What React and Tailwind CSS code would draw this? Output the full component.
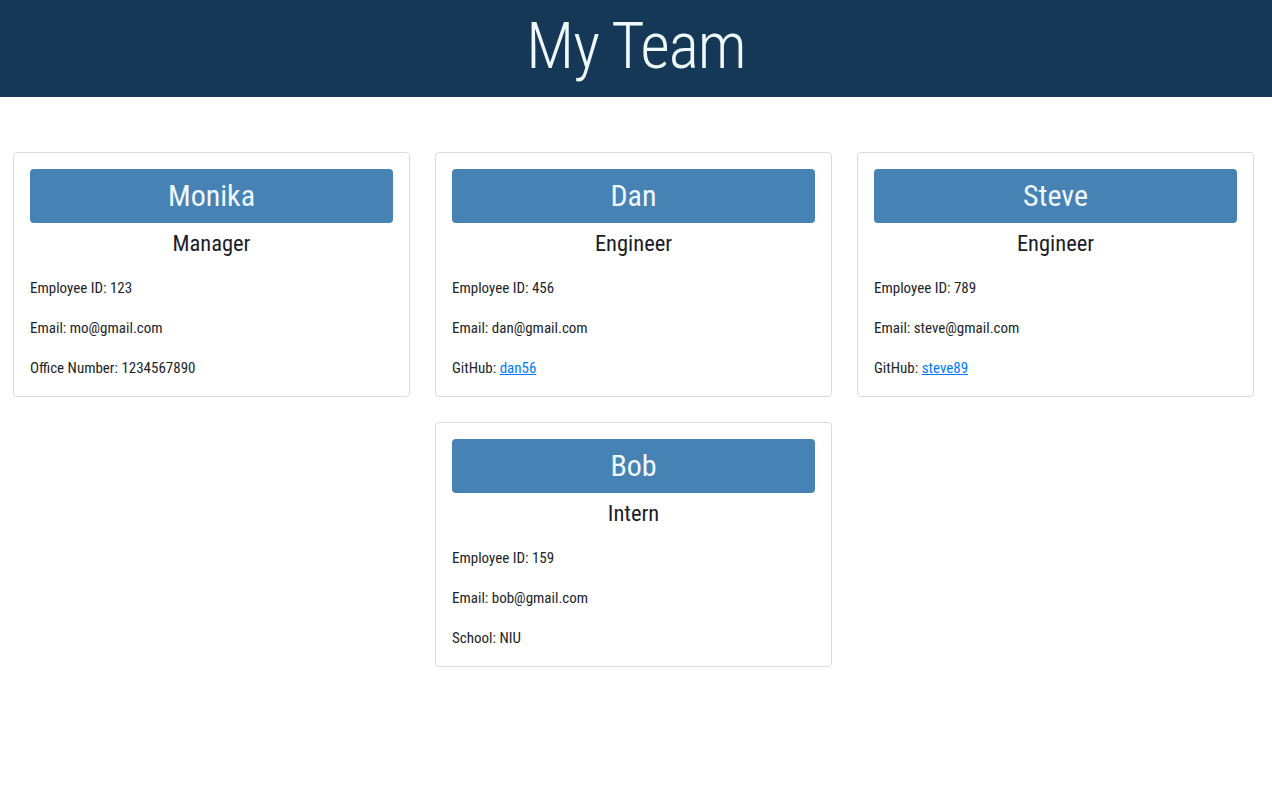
const team = [
  { name: 'Monika', role: 'Manager', id: 123, email: 'mo@gmail.com', extra: { label: 'Office Number', value: '1234567890' } },
  { name: 'Dan', role: 'Engineer', id: 456, email: 'dan@gmail.com', extra: { label: 'GitHub', value: 'dan56', link: true } },
  { name: 'Steve', role: 'Engineer', id: 789, email: 'steve@gmail.com', extra: { label: 'GitHub', value: 'steve89', link: true } },
  { name: 'Bob', role: 'Intern', id: 159, email: 'bob@gmail.com', extra: { label: 'School', value: 'NIU' } },
];

function EmployeeCard({ person }) {
  return (
    <div className="w-[397px] border border-[#dcdcdc] rounded-[4px] bg-white p-4">
      <h2 className="bg-[#4682b4] text-[#f0f8ff] rounded-[4px] h-[54px] flex items-center justify-center text-[30px] leading-none">
        {person.name}
      </h2>
      <h4 className="text-center text-[22.5px] leading-[29px] text-[#1c1c2a] mt-[6px] mb-[18px]">{person.role}</h4>
      <div className="flex flex-col gap-4 text-[15px] leading-6 text-[#212529]">
        <p>Employee ID: {person.id}</p>
        <p>Email: {person.email}</p>
        <p>
          {person.extra.label}:{' '}
          {person.extra.link ? (
            <a href="#" className="text-[#007bff] underline">{person.extra.value}</a>
          ) : (
            person.extra.value
          )}
        </p>
      </div>
    </div>
  );
}

export default function App() {
  return (
    <div
      className="min-h-screen bg-white font-stretch-[62.5%]"
      style={{ fontFamily: "'Roboto Condensed', 'Noto Sans', sans-serif" }}
    >
      <header className="bg-[#163857] h-[97px] flex items-center justify-center">
        <h1 className="text-[#f0f8ff] text-[64px] font-light tracking-[-1px] leading-none -mt-[3px]">My Team</h1>
      </header>
      <main className="mt-[55px] ml-[13px] w-[1241px] flex flex-wrap justify-center gap-[25px]">
        {team.map((person) => (
          <EmployeeCard key={person.name} person={person} />
        ))}
      </main>
    </div>
  );
}
